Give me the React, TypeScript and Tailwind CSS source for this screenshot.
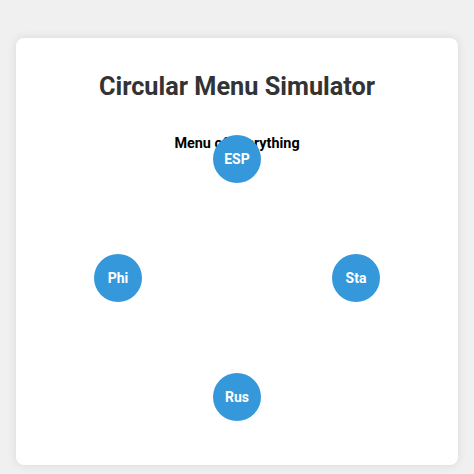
import React from 'react';

const items = [
  { label: 'ESP', angle: -90 },
  { label: 'Sta', angle: 0 },
  { label: 'Rus', angle: 90 },
  { label: 'Phi', angle: 180 },
];

const RADIUS = 119;
const SIZE = 286;

export default function App() {
  return (
    <div
      className="h-[474px] bg-[#f0f0f0] px-4 pt-[38px] pb-[9px]"
      style={{ fontFamily: 'Roboto, "Liberation Sans", sans-serif' }}
    >
      <div className="h-full bg-white rounded-lg shadow-[0_0_10px_rgba(0,0,0,0.1)] flex flex-col items-center pt-[34px]">
        <h1 className="text-[25.3px] leading-[30px] font-bold text-[#333]">Circular Menu Simulator</h1>
        <h2 className="mt-[33px] text-[14.4px] leading-[18px] font-bold text-black">Menu of everything</h2>
        <div className="relative mt-[-18px]" style={{ width: SIZE, height: SIZE }}>
          {items.map((it) => {
            const rad = (it.angle * Math.PI) / 180;
            const x = SIZE / 2 + RADIUS * Math.cos(rad) - 24;
            const y = SIZE / 2 + RADIUS * Math.sin(rad) - 24;
            return (
              <button
                key={it.label}
                className="absolute w-12 h-12 rounded-full bg-[#3498db] text-white text-[14px] font-bold flex items-center justify-center"
                style={{ left: x, top: y }}
              >
                {it.label}
              </button>
            );
          })}
        </div>
      </div>
    </div>
  );
}
